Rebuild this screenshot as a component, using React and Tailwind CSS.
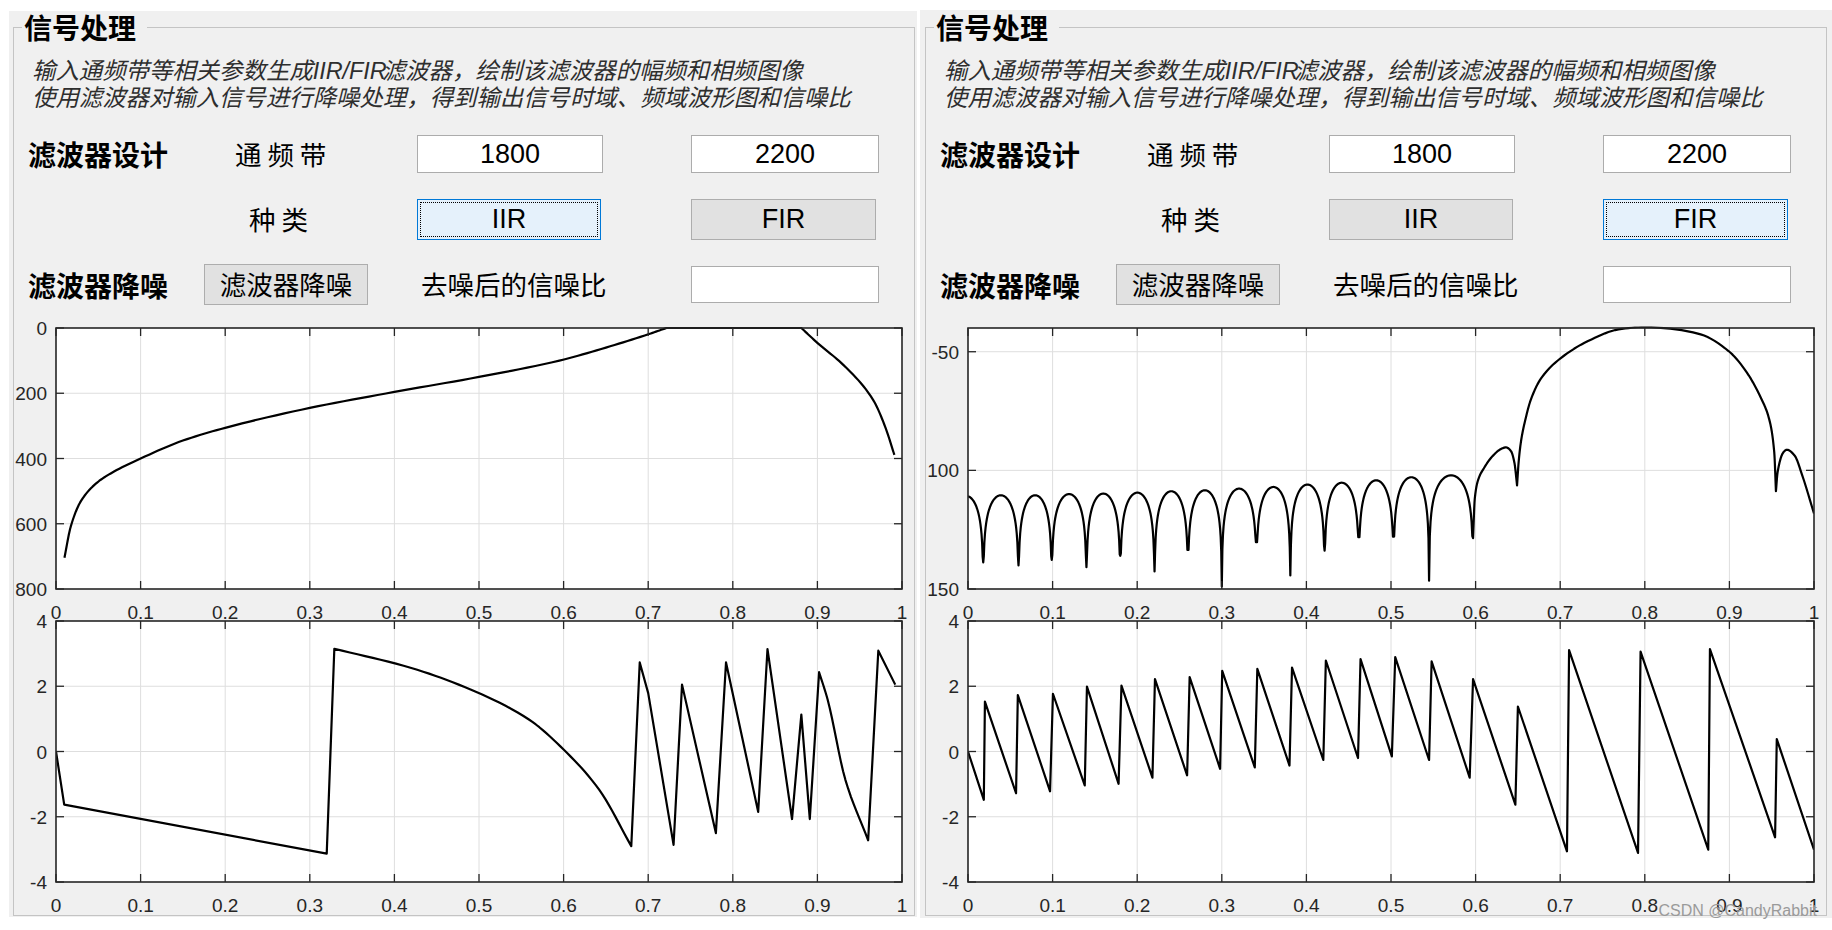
import React from "react";

// monotone cubic (pchip) sampling, keeps the curves from overshooting
const pchip = (pts, n = 8) => {
  const N = pts.length;
  const h = [];
  const m = [];
  for (let i = 0; i < N - 1; i++) {
    h[i] = pts[i + 1][0] - pts[i][0];
    m[i] = (pts[i + 1][1] - pts[i][1]) / h[i];
  }
  const t = new Array(N);
  t[0] = m[0];
  t[N - 1] = m[N - 2];
  for (let i = 1; i < N - 1; i++) {
    if (m[i - 1] * m[i] <= 0) t[i] = 0;
    else {
      const w1 = 2 * h[i] + h[i - 1];
      const w2 = h[i] + 2 * h[i - 1];
      t[i] = (w1 + w2) / (w1 / m[i - 1] + w2 / m[i]);
    }
  }
  const out = [];
  for (let i = 0; i < N - 1; i++) {
    for (let k = 0; k < n; k++) {
      const s = k / n;
      const s2 = s * s;
      const s3 = s2 * s;
      const y =
        (2 * s3 - 3 * s2 + 1) * pts[i][1] +
        (s3 - 2 * s2 + s) * h[i] * t[i] +
        (-2 * s3 + 3 * s2) * pts[i + 1][1] +
        (s3 - s2) * h[i] * t[i + 1];
      out.push([pts[i][0] + s * h[i], y]);
    }
  }
  out.push(pts[N - 1]);
  return out;
};

// one side lobe between two nulls
const lobe = (a, b, da, db, peak, n = 60) => {
  const out = [];
  for (let k = 0; k <= n; k++) {
    const t = k / n;
    const v = peak + 20 * Math.log10(Math.max(Math.sin(Math.PI * t), 1e-6));
    out.push([a + (b - a) * t, Math.max(v, t < 0.5 ? da : db)]);
  }
  return out;
};

const iirMag = [
  ...pchip(
    [
      [0.01, -704], [0.0174, -609], [0.0296, -530], [0.049, -473], [0.0686, -440],
      [0.1, -400], [0.15, -345], [0.2, -306], [0.3, -245], [0.4, -196],
      [0.5, -150], [0.595, -100], [0.65, -60], [0.701, -18.5], [0.7215, 0],
    ],
    10
  ),
  ...pchip(
    [
      [0.881, 0], [0.9006, -47], [0.9306, -113], [0.966, -221],
      [0.98, -302], [0.991, -389],
    ],
    12
  ),
].map(([x, v]) => [x, Math.min(v, 0)]);

const iirPhase = [
  [0, 0], [0.0097, -1.63], [0.32, -3.13],
  ...pchip([[0.329, 3.15], [0.42, 2.56], [0.49, 1.9], [0.559, 0.98], [0.6, 0.06], [0.642, -1.17], [0.68, -2.9]], 10),
  [0.69, 2.73], [0.7, 1.79], [0.73, -2.86], [0.74, 2.05], [0.78, -2.5], [0.792, 2.73],
  [0.83, -1.85], [0.841, 3.14], [0.87, -2.07], [0.881, 1.13], [0.891, -2.07],
  ...pchip([[0.902, 2.43], [0.912, 1.6], [0.933, -0.86], [0.96, -2.72]], 8),
  [0.972, 3.09], [0.992, 2.05],
];

const firMag = (() => {
  const nulls = [
    [0.018, -138.8], [0.0597, -140.1], [0.099, -137.7], [0.14, -140.8], [0.18, -136],
    [0.2205, -142.6], [0.26, -133.5], [0.3, -148.9], [0.341, -130.3], [0.381, -144.3],
    [0.4215, -133.8], [0.462, -128.2], [0.503, -127.9], [0.545, -146.5], [0.597, -128.6],
  ];
  const peaks = [-110.5, -110.5, -110, -109.8, -109.4, -108.8, -108.4, -107.7, -107, -106, -105.2, -104.2, -102.9, -102.1];
  let pts = lobe(-0.022, 0.018, -139, -138.8, -110.8).filter(([x]) => x >= 0);
  for (let i = 0; i < nulls.length - 1; i++) {
    pts = pts.concat(lobe(nulls[i][0], nulls[i + 1][0], nulls[i][1], nulls[i + 1][1], peaks[i]).slice(1));
  }
  pts = pts.concat(
    pchip([[0.597, -128.6], [0.599, -112], [0.603, -104], [0.61, -99], [0.62, -94], [0.63, -91], [0.636, -90.3], [0.642, -92], [0.646, -97], [0.649, -106.3]], 6),
    pchip(
      [
        [0.649, -106.3], [0.651, -96], [0.654, -87], [0.659, -78.4], [0.665, -70.5], [0.678, -60.9],
        [0.704, -51.8], [0.737, -44.8], [0.769, -40.6], [0.8, -39.6], [0.83, -40.3], [0.866, -42.7],
        [0.899, -49.7], [0.918, -57.4], [0.938, -70], [0.947, -78.4], [0.953, -92.3], [0.955, -108.8],
      ],
      8
    ),
    pchip([[0.955, -108.8], [0.957, -100.7], [0.964, -92.3], [0.968, -91.3], [0.977, -93.7], [0.986, -102], [1, -118.2]], 6)
  );
  return pts;
})();

const firPhase = [
  [0, 0], [0.0187, -1.48], [0.02, 1.53], [0.0568, -1.28], [0.0589, 1.73], [0.097, -1.22],
  [0.1004, 1.77], [0.138, -1.04], [0.1406, 1.99], [0.178, -0.99], [0.1814, 2.02], [0.218, -0.8],
  [0.221, 2.22], [0.259, -0.73], [0.262, 2.28], [0.298, -0.53], [0.3005, 2.47], [0.339, -0.49],
  [0.342, 2.53], [0.38, -0.43], [0.383, 2.57], [0.42, -0.26], [0.423, 2.79], [0.461, -0.2],
  [0.464, 2.83], [0.501, -0.15], [0.505, 2.89], [0.545, -0.26], [0.548, 2.76], [0.593, -0.8],
  [0.597, 2.22], [0.647, -1.63], [0.65, 1.38], [0.708, -3.06], [0.7105, 3.11], [0.792, -3.11],
  [0.795, 3.06], [0.875, -3.01], [0.877, 3.14], [0.954, -2.63], [0.956, 0.38], [1, -3.01],
];

const XTICKS = [0, 0.1, 0.2, 0.3, 0.4, 0.5, 0.6, 0.7, 0.8, 0.9, 1];
const L = 42;
const W = 846;
const H = 261;

const Axes = ({ id, top, ymin, ymax, yticks, data }) => {
  const sx = (x) => L + x * W;
  const sy = (v) => top + ((ymax - v) / (ymax - ymin)) * H;
  const d = data.map(([x, v], i) => `${i ? "L" : "M"}${sx(x).toFixed(2)} ${sy(v).toFixed(2)}`).join(" ");
  return (
    <g>
      <defs>
        <clipPath id={id}>
          <rect x={L} y={top - 1.5} width={W} height={H + 3} />
        </clipPath>
      </defs>
      <rect x={L} y={top} width={W} height={H} fill="#ffffff" />
      {XTICKS.slice(1, -1).map((x) => (
        <line key={x} x1={sx(x)} x2={sx(x)} y1={top} y2={top + H} stroke="#dedede" strokeWidth="1" />
      ))}
      {yticks
        .filter((t) => t.v > ymin && t.v < ymax)
        .map((t) => (
          <line key={t.v} x1={L} x2={L + W} y1={sy(t.v)} y2={sy(t.v)} stroke="#dedede" strokeWidth="1" />
        ))}
      <path d={d} fill="none" stroke="#000000" strokeWidth="2.2" strokeLinejoin="round" clipPath={`url(#${id})`} />
      {XTICKS.map((x) => (
        <g key={x}>
          <line x1={sx(x)} x2={sx(x)} y1={top + H} y2={top + H - 8} stroke="#262626" strokeWidth="1.3" />
          <line x1={sx(x)} x2={sx(x)} y1={top} y2={top + 8} stroke="#262626" strokeWidth="1.3" />
          <text x={sx(x)} y={top + H + 30} textAnchor="middle" fontSize="19" fill="#262626" fontFamily="Liberation Sans, Arial, sans-serif">
            {x}
          </text>
        </g>
      ))}
      {yticks.map((t) => (
        <g key={t.v}>
          <line x1={L} x2={L + 8} y1={sy(t.v)} y2={sy(t.v)} stroke="#262626" strokeWidth="1.3" />
          <line x1={L + W} x2={L + W - 8} y1={sy(t.v)} y2={sy(t.v)} stroke="#262626" strokeWidth="1.3" />
          <text x={L - 9} y={sy(t.v) + 7} textAnchor="end" fontSize="19" fill="#262626" fontFamily="Liberation Sans, Arial, sans-serif">
            {t.label}
          </text>
        </g>
      ))}
      <rect x={L} y={top} width={W} height={H} fill="none" stroke="#262626" strokeWidth="1.6" />
    </g>
  );
};

const phaseTicks = [
  { v: 4, label: "4" },
  { v: 2, label: "2" },
  { v: 0, label: "0" },
  { v: -2, label: "-2" },
  { v: -4, label: "-4" },
];

const TextBox = ({ value, className }) => (
  <div
    className={`h-[38px] bg-white border border-[#acacac] flex items-center justify-center text-[27px] text-black font-['Liberation_Sans',Arial,sans-serif] ${className}`}
  >
    {value}
  </div>
);

const ToggleBtn = ({ label, active, className }) =>
  active ? (
    <div className={`h-[41px] bg-[#e5f1fb] border border-[#0078d7] p-[2px] ${className}`}>
      <div className="h-full w-full border border-dotted border-black flex items-center justify-center text-[27px] text-black font-['Liberation_Sans',Arial,sans-serif]">
        {label}
      </div>
    </div>
  ) : (
    <div
      className={`h-[41px] bg-[#e1e1e1] border border-[#adadad] flex items-center justify-center text-[27px] text-black font-['Liberation_Sans',Arial,sans-serif] ${className}`}
    >
      {label}
    </div>
  );

const Panel = ({ side }) => {
  const isFir = side === "fir";
  return (
    <fieldset className="w-[902px] h-[904px] border border-[#c4c4c4] font-['Noto_Sans_CJK_SC',sans-serif] text-black">
      <legend className="ml-[8px] pl-[2px] pr-[11px] text-[28px] leading-[30px] font-bold">信号处理</legend>

      <div className="pt-[14px] pl-[18px] text-[23.4px] leading-[27px] italic text-[#2e2e2e] whitespace-nowrap [text-autospace:no-autospace]">
        <div className="h-[27px]">
          输入通频带等相关参数生成<span className="font-['Liberation_Sans',Arial,sans-serif] mr-[-5px]">IIR/FIR</span>滤波器，绘制该滤波器的幅频和相频图像
        </div>
        <div className="h-[27px]">使用滤波器对输入信号进行降噪处理，得到输出信号时域、频域波形图和信噪比</div>
      </div>

      <div className="mt-[25px] h-[38px] flex items-center pl-[14px]">
        <div className="w-[207px] text-[28px] font-bold leading-none">滤波器设计</div>
        <div className="w-[182px] text-[26.5px] leading-none">通 频 带</div>
        <TextBox value="1800" className="w-[186px]" />
        <TextBox value="2200" className="w-[188px] ml-[88px]" />
      </div>

      <div className="mt-[26px] h-[41px] flex items-center pl-[14px]">
        <div className="w-[207px]" />
        <div className="w-[182px] pl-[14px] text-[26.5px] leading-none">种 类</div>
        <ToggleBtn label="IIR" active={!isFir} className="w-[184px]" />
        <ToggleBtn label="FIR" active={isFir} className="w-[185px] ml-[90px]" />
      </div>

      <div className="mt-[24px] h-[41px] flex items-center pl-[14px]">
        <div className="w-[176px] text-[28px] font-bold leading-none">滤波器降噪</div>
        <div className="w-[164px] h-[41px] bg-[#e1e1e1] border border-[#adadad] flex items-center justify-center text-[26.5px] leading-none">
          滤波器降噪
        </div>
        <div className="w-[270px] ml-[53px] text-[26.5px] leading-none">去噪后的信噪比</div>
        <div className="w-[188px] h-[37px] bg-white border border-[#acacac]" />
      </div>

      <svg width="900" height="600" className="block mt-[8px] overflow-visible">
        {isFir ? (
          <>
            <Axes
              id="firMag"
              top={15}
              ymin={-150}
              ymax={-40}
              yticks={[
                { v: -50, label: "-50" },
                { v: -100, label: "100" },
                { v: -150, label: "150" },
              ]}
              data={firMag}
            />
            <Axes id="firPhase" top={308} ymin={-4} ymax={4} yticks={phaseTicks} data={firPhase} />
          </>
        ) : (
          <>
            <Axes
              id="iirMag"
              top={15}
              ymin={-800}
              ymax={0}
              yticks={[
                { v: 0, label: "0" },
                { v: -200, label: "200" },
                { v: -400, label: "400" },
                { v: -600, label: "600" },
                { v: -800, label: "800" },
              ]}
              data={iirMag}
            />
            <Axes id="iirPhase" top={308} ymin={-4} ymax={4} yticks={phaseTicks} data={iirPhase} />
          </>
        )}
      </svg>
    </fieldset>
  );
};

export default function App() {
  return (
    <div className="relative w-[1832px] h-[930px] bg-white flex items-start overflow-hidden">
      <div className="mt-[11px] ml-[9px] w-[908px] h-[906px] bg-[#f0f0f0] pl-[4px] pt-[1px]">
        <Panel side="iir" />
      </div>
      <div className="mt-[10px] ml-[3px] w-[912px] h-[908px] bg-[#f0f0f0] pl-[5px] pt-[2px]">
        <Panel side="fir" />
      </div>
      <div className="absolute right-[15px] top-[902px] text-[16px] leading-[18px] text-[#9a9a9a] font-['Liberation_Sans',Arial,sans-serif]">
        CSDN @CandyRabbit
      </div>
    </div>
  );
}
